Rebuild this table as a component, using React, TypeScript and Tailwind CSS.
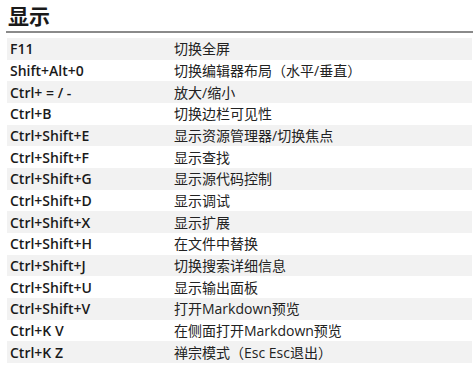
const rows: [string, string][] = [
  ["F11", "切换全屏"],
  ["Shift+Alt+0", "切换编辑器布局（水平/垂直）"],
  ["Ctrl+ = / -", "放大/缩小"],
  ["Ctrl+B", "切换边栏可见性"],
  ["Ctrl+Shift+E", "显示资源管理器/切换焦点"],
  ["Ctrl+Shift+F", "显示查找"],
  ["Ctrl+Shift+G", "显示源代码控制"],
  ["Ctrl+Shift+D", "显示调试"],
  ["Ctrl+Shift+X", "显示扩展"],
  ["Ctrl+Shift+H", "在文件中替换"],
  ["Ctrl+Shift+J", "切换搜索详细信息"],
  ["Ctrl+Shift+U", "显示输出面板"],
  ["Ctrl+Shift+V", "打开Markdown预览"],
  ["Ctrl+K V", "在侧面打开Markdown预览"],
  ["Ctrl+K Z", "禅宗模式（Esc Esc退出）"],
];

export default function App() {
  return (
    <div className="w-[474px] h-[368px] bg-white text-[#1a1a1a] font-['Open_Sans','Noto_Sans_CJK_SC',sans-serif] overflow-hidden">
      <div className="pl-[8px] pt-[2px] h-[31px]">
        <h1 className="text-[21px] leading-[27px] font-bold font-['Noto_Sans_CJK_SC',sans-serif]">显示</h1>
      </div>
      <div className="ml-[6px] mr-[1px] h-[2px] bg-[#8a8a8a]" />
      <div className="pt-[5px] pl-[7px] pr-[2px]">
        {rows.map(([key, desc], i) => (
          <div
            key={key}
            className={`flex items-center h-[21.67px] ${i % 2 === 0 ? "bg-[#f2f2f2]" : "bg-white"}`}
          >
            <span className="w-[167px] pl-[3px] text-[14px] font-semibold">{key}</span>
            <span className="text-[14px] text-[#222]">{desc}</span>
          </div>
        ))}
      </div>
    </div>
  );
}
